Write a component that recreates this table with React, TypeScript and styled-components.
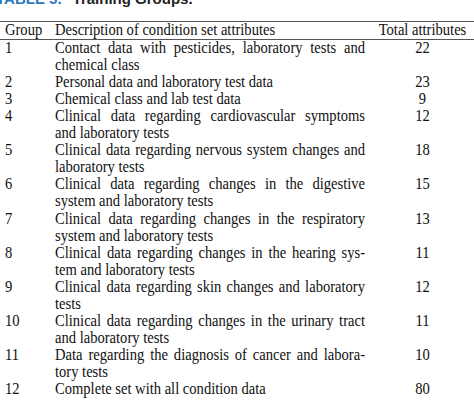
import React from 'react'
import styled, { createGlobalStyle } from 'styled-components'

const Global = createGlobalStyle`
  html, body {
    margin: 0;
    padding: 0;
    background: #ffffff;
    overflow: hidden;
  }
`

type Group = { id: number; lines: string[]; total: number }

const groups: Group[] = [
  { id: 1, lines: ['Contact data with pesticides, laboratory tests and', 'chemical class'], total: 22 },
  { id: 2, lines: ['Personal data and laboratory test data'], total: 23 },
  { id: 3, lines: ['Chemical class and lab test data'], total: 9 },
  { id: 4, lines: ['Clinical data regarding cardiovascular symptoms', 'and laboratory tests'], total: 12 },
  { id: 5, lines: ['Clinical data regarding nervous system changes and', 'laboratory tests'], total: 18 },
  { id: 6, lines: ['Clinical data regarding changes in the digestive', 'system and laboratory tests'], total: 15 },
  { id: 7, lines: ['Clinical data regarding changes in the respiratory', 'system and laboratory tests'], total: 13 },
  { id: 8, lines: ['Clinical data regarding changes in the hearing sys-', 'tem and laboratory tests'], total: 11 },
  { id: 9, lines: ['Clinical data regarding skin changes and laboratory', 'tests'], total: 12 },
  { id: 10, lines: ['Clinical data regarding changes in the urinary tract', 'and laboratory tests'], total: 11 },
  { id: 11, lines: ['Data regarding the diagnosis of cancer and labora-', 'tory tests'], total: 10 },
  { id: 12, lines: ['Complete set with all condition data'], total: 80 },
]

// the scan is squeezed sideways a bit, so the table is drawn wider and scaled back
const SQUEEZE = 0.9

const Page = styled.div`
  width: 474px;
  height: 402px;
  overflow: hidden;
`

const Caption = styled.div`
  margin: -11px 0 0 -4px;
  height: 20px;
  line-height: 20px;
  font-family: "Liberation Sans Narrow", "Liberation Sans", sans-serif;
  font-weight: 700;
  font-size: 15px;
  color: #222;
  white-space: nowrap;
`

const Label = styled.span`
  color: #2b78bd;
  margin-right: 11px;
`

const Table = styled.div`
  margin-top: 11.5px;
  width: ${474 / SQUEEZE}px;
  transform: scaleX(${SQUEEZE});
  transform-origin: 0 0;
  font-family: "Liberation Serif", "Times New Roman", serif;
  font-size: 16.2px;
  line-height: 17.1px;
  color: #111;
`

const Row = styled.div<{ $head?: boolean }>`
  display: grid;
  grid-template-columns: ${55 / SQUEEZE}px ${310 / SQUEEZE}px 1fr;
  ${(p) => p.$head && `
    border-top: 1.5px solid #555;
    border-bottom: 1.5px solid #555;
  `}
`

const GroupCell = styled.div`
  padding-left: ${5 / SQUEEZE}px;
`

const DescCell = styled.div``

const Line = styled.span<{ $justify?: boolean }>`
  display: block;
  white-space: nowrap;
  text-align: ${(p) => (p.$justify ? 'justify' : 'left')};
  text-align-last: ${(p) => (p.$justify ? 'justify' : 'left')};
`

const TotalCell = styled.div`
  padding-left: ${6 / SQUEEZE}px;
  text-align: center;
  white-space: nowrap;
`

export default function App() {
  return (
    <Page>
      <Global />
      <Caption>
        <Label>TABLE 5.</Label>Training Groups.
      </Caption>
      <Table>
        <Row $head>
          <GroupCell>Group</GroupCell>
          <DescCell>Description of condition set attributes</DescCell>
          <TotalCell>Total attributes</TotalCell>
        </Row>
        {groups.map((g) => (
          <Row key={g.id}>
            <GroupCell>{g.id}</GroupCell>
            <DescCell>
              {g.lines.map((l, i) => (
                <Line key={i} $justify={i < g.lines.length - 1}>
                  {l}
                </Line>
              ))}
            </DescCell>
            <TotalCell>{g.total}</TotalCell>
          </Row>
        ))}
      </Table>
    </Page>
  )
}
